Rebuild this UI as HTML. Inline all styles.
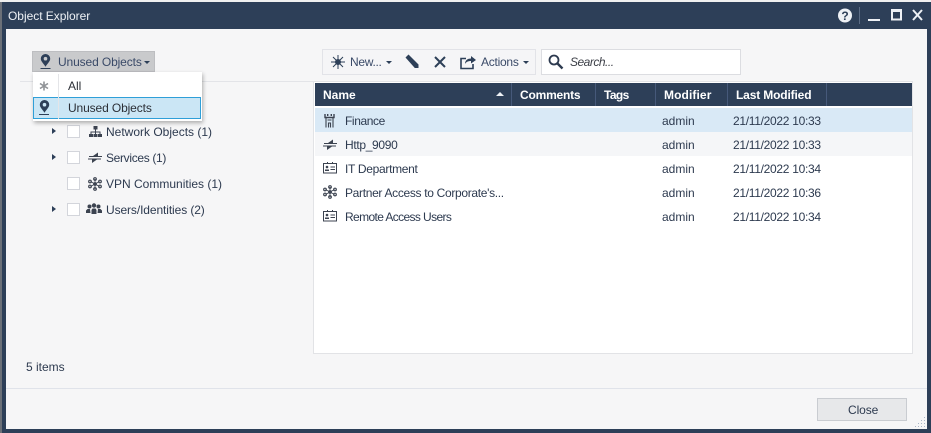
<!DOCTYPE html>
<html><head><meta charset="utf-8">
<style>
html,body{margin:0;padding:0;width:931px;height:433px;overflow:hidden;background:#2d3f58}
body{position:relative;font-family:"Liberation Sans","DejaVu Sans",sans-serif;font-size:12px;color:#2d3a4f}
div,span,svg{position:absolute;box-sizing:border-box}
.t{white-space:nowrap;line-height:16px;height:16px}
.th{color:#fff;font-weight:bold;white-space:nowrap;top:87px;line-height:16px}
.dv{top:83px;height:23px;width:1px;background:#46597a}
.cb{left:67px;width:13px;height:13px;background:#fff;border:1px solid #d3d5db}
.row{left:315px;width:597px;height:24px}
.tri{width:0;height:0;border-top:3.5px solid transparent;border-bottom:3.5px solid transparent;border-left:4px solid #2d3f58;left:52px}
.d{letter-spacing:-.3px}
</style></head><body>
<div style="left:0;top:0;width:931px;height:2px;background:#f0f0f0"></div>
<div style="left:0;top:2px;width:2px;height:431px;background:#6b7078"></div>
<div style="left:6px;top:29px;width:921px;height:400px;background:#f6f6f7"></div>

<div class="t" style="left:8px;top:8px;color:#eef1f5;letter-spacing:-.03px">Object Explorer</div>
<svg style="left:838px;top:7px" width="93" height="18" viewBox="0 0 93 18">
<circle cx="7" cy="8.500" r="7" fill="#eef1f5"/>
<text x="7" y="13" font-family="Liberation Sans" font-weight="bold" font-size="12" text-anchor="middle" fill="#2d3f58">?</text>
<rect x="21" y="0" width="1" height="17" fill="#5b6c85"/>
<rect x="30" y="12" width="12" height="2" fill="#eef1f5"/>
<rect x="54" y="3.500" width="9" height="9" fill="none" stroke="#eef1f5" stroke-width="2"/>
<rect x="53" y="2" width="11" height="3" fill="#eef1f5"/>
<path d="M75 3l9 10M84 3l-9 10" stroke="#eef1f5" stroke-width="2" fill="none"/>
</svg>

<div style="left:20px;top:81px;width:294px;height:1px;background:#e3e4e8"></div>

<!-- filter button -->
<div style="left:32px;top:51px;width:123px;height:21px;background:#c9cacc;border:1px solid #bdbec1"></div>
<svg style="left:38px;top:54px" width="15" height="16" viewBox="0 0 15 16">
<path d="M7.500 0a4.700 4.700 0 0 1 4.700 4.700c0 2.700-3 5-4.700 8c-1.700-3-4.700-5.300-4.700-8A4.700 4.700 0 0 1 7.500 0z" fill="#2d3f58"/><circle cx="7.500" cy="4.700" r="1.800" fill="#c9cacc"/>
<rect x="2.500" y="14" width="10" height="1" fill="#2d3f58"/></svg>
<div class="t" style="left:58px;top:54px;color:#3a4a68;letter-spacing:-.12px">Unused Objects</div>
<div style="left:144px;top:61px;border-left:3px solid transparent;border-right:3px solid transparent;border-top:3px solid #2d3f58"></div>

<!-- tree -->
<div class="tri" style="top:128px"></div>
<div class="cb" style="top:125px"></div>
<svg style="left:89px;top:125px" width="13" height="13" viewBox="0 0 13 13"><path d="M4.500 1h4v3.500h-4zM6 4.500h1V6.500h4.500V9h-1V7.500H7V9H6V7.500H2.500V9h-1V6.500H6zM0 9h4v3H0zM4.500 9h4v3h-4zM9 9h4v3H9z" fill="#3c4350"/></svg>
<div class="t" style="left:106px;top:124px">Network Objects (1)</div>

<div class="tri" style="top:154px"></div>
<div class="cb" style="top:151px"></div>
<svg style="left:88px;top:151px" width="14" height="13" viewBox="0 0 14 13"><path d="M1 5h13v1H1zM5 5l5-3.500V5zM0 7.500h13v1H0zM4 8.500h5L4 12z" fill="#3c4350"/></svg>
<div class="t" style="left:106px;top:150px;letter-spacing:-.33px">Services (1)</div>

<div class="cb" style="top:177px"></div>
<svg style="left:88px;top:177px" width="14" height="14" viewBox="0 0 14 14" fill="none" stroke="#3c4350"><path d="M7 2v10M2.500 4.500l9 5M11.500 4.500l-9 5" stroke-width=".8"/><circle cx="7" cy="2" r="1.300" stroke-width="1.200"/><circle cx="7" cy="12" r="1.300" stroke-width="1.200"/><circle cx="2" cy="4.500" r="1.300" stroke-width="1.200"/><circle cx="12" cy="4.500" r="1.300" stroke-width="1.200"/><circle cx="2" cy="9.500" r="1.300" stroke-width="1.200"/><circle cx="12" cy="9.500" r="1.300" stroke-width="1.200"/><circle cx="7" cy="7" r="1.300" stroke-width="1.200"/></svg>
<div class="t" style="left:106px;top:176px">VPN Communities (1)</div>

<div class="tri" style="top:206px"></div>
<div class="cb" style="top:203px"></div>
<svg style="left:86px;top:202px" width="16" height="14" viewBox="0 0 16 14" fill="#3c4350"><circle cx="3.500" cy="4.500" r="2"/><circle cx="12.500" cy="4.500" r="2"/><circle cx="8" cy="3.500" r="2.200"/><path d="M0 11V8.500l1.500-1.500H4l.5 4zM16 11V8.500L14.500 7H12l-.5 4zM5.500 12V8l1-1.500h3l1 1.500v4z"/></svg>
<div class="t" style="left:106px;top:202px;letter-spacing:-.1px">Users/Identities (2)</div>

<!-- dropdown -->
<div style="left:33px;top:72px;width:169px;height:49px;background:#fff;box-shadow:1px 2px 4px rgba(0,0,0,.3)"></div>
<div style="left:33px;top:97px;width:168px;height:22px;background:#cbe6f5;border:1px solid #2f9fd8"></div>
<div style="left:58px;top:74px;width:1px;height:45px;background:#e4e5e8"></div>
<svg style="left:39px;top:81px" width="10" height="10" viewBox="0 0 10 10"><path d="M5 0.500v9M1 2.500l8 5M9 2.500l-8 5" stroke="#8f9296" stroke-width="1.600" fill="none"/></svg>
<div class="t" style="left:68px;top:78px;color:#2b2f36">All</div>
<svg style="left:37px;top:100px" width="15" height="16" viewBox="0 0 15 16">
<path d="M7.500 0a4.700 4.700 0 0 1 4.700 4.700c0 2.700-3 5-4.700 8c-1.700-3-4.700-5.300-4.700-8A4.700 4.700 0 0 1 7.500 0z" fill="#2d3f58"/><circle cx="7.500" cy="4.700" r="1.800" fill="#cbe6f5"/>
<rect x="2" y="14" width="10" height="1" fill="#2d3f58"/></svg>
<div class="t" style="left:68px;top:100px;color:#2b2f36;letter-spacing:-.12px">Unused Objects</div>

<!-- toolbar -->
<div style="left:322px;top:49px;width:214px;height:26px;background:#f5f5f7;border:1px solid #e2e3e8"></div>
<svg style="left:330px;top:54px" width="16" height="16" viewBox="0 0 16 16"><path d="M8 1v14M1 8h14M3 3l10 10M13 3L3 13" stroke="#2d3f58" stroke-width="1"/><circle cx="8" cy="8" r="3" fill="#2d3f58"/></svg>
<div class="t" style="left:350px;top:54px;color:#3a4a68;letter-spacing:-.3px">New...</div>
<div style="left:386px;top:61px;border-left:3px solid transparent;border-right:3px solid transparent;border-top:3px solid #2d3f58"></div>
<svg style="left:405px;top:54px" width="14" height="15" viewBox="0 0 14 15"><path d="M3.500 0.500L13.500 10.500L13.500 14L9.800 14L0.500 3.500z" fill="#2d3f58"/></svg>
<svg style="left:434px;top:56px" width="12" height="12" viewBox="0 0 12 12"><path d="M1 1l10 10M11 1L1 11" stroke="#2d3f58" stroke-width="2"/></svg>
<svg style="left:460px;top:54px" width="16" height="16" viewBox="0 0 16 16"><path d="M6 4.500H1v10h12V10" stroke="#2d3f58" stroke-width="1.600" fill="none"/><path d="M5 10c0-4 3-5.500 6-5.500V2l5 4-5 3.500V7c-3 0-5 1-6 3z" fill="#2d3f58"/></svg>
<div class="t" style="left:481px;top:54px;color:#3a4a68;letter-spacing:-.25px">Actions</div>
<div style="left:523px;top:61px;border-left:3px solid transparent;border-right:3px solid transparent;border-top:3px solid #2d3f58"></div>

<!-- search -->
<div style="left:541px;top:49px;width:200px;height:26px;background:#fff;border:1px solid #dcdde1"></div>
<svg style="left:548px;top:54px" width="16" height="16" viewBox="0 0 16 16"><circle cx="6" cy="6" r="4.500" fill="none" stroke="#2d3a4f" stroke-width="1.800"/><path d="M9.500 9.500l5 5" stroke="#2d3a4f" stroke-width="2.400"/></svg>
<div class="t" style="left:570px;top:54px;font-style:italic;color:#3d4048;letter-spacing:-.5px">Search...</div>

<!-- table -->
<div style="left:313px;top:81px;width:600px;height:273px;background:#fff;border:1px solid #e2e3e6"></div>
<div style="left:315px;top:83px;width:597px;height:23px;background:#2d3f58"></div>
<div class="th" style="left:323px">Name</div>
<div style="left:496px;top:92px;border-left:4px solid transparent;border-right:4px solid transparent;border-bottom:4px solid #eef1f5"></div>
<div class="dv" style="left:511px"></div>
<div class="th" style="left:520px;letter-spacing:-.2px">Comments</div>
<div class="dv" style="left:595px"></div>
<div class="th" style="left:604px;letter-spacing:-.6px">Tags</div>
<div class="dv" style="left:655px"></div>
<div class="th" style="left:664px;letter-spacing:.1px">Modifier</div>
<div class="dv" style="left:727px"></div>
<div class="th" style="left:736px;letter-spacing:-.15px">Last Modified</div>
<div class="dv" style="left:826px"></div>

<div class="row" style="top:108px;background:#d9e9f6"></div>
<div class="row" style="top:132px;background:#f5f6f8"></div>

<svg style="left:323px;top:114px" width="13" height="14" viewBox="0 0 13 14" fill="none" stroke="#3c4350"><path d="M2 0v3.500h9V0M4.700 0v2M8.300 0v2" stroke-width="1.400"/><path d="M3 3.500v10M10 3.500v10M4.500 6h4M5.500 13.500V9h2v4.500" stroke-width="1.100"/></svg>
<div class="t" style="left:345px;top:113px;letter-spacing:-.4px">Finance</div>
<div class="t" style="left:662px;top:113px">admin</div>
<div class="t d" style="left:733px;top:113px">21/11/2022 10:33</div>

<svg style="left:323px;top:138px" width="14" height="13" viewBox="0 0 14 13"><path d="M1 5h13v1H1zM5 5l5-3.500V5zM0 7.500h13v1H0zM4 8.500h5L4 12z" fill="#3c4350"/></svg>
<div class="t" style="left:345px;top:137px;letter-spacing:-.33px">Http_9090</div>
<div class="t" style="left:662px;top:137px">admin</div>
<div class="t d" style="left:733px;top:137px">21/11/2022 10:33</div>

<svg style="left:323px;top:162px" width="14" height="12" viewBox="0 0 14 12"><rect x="0.500" y="1.500" width="13" height="9.500" fill="none" stroke="#3c4350"/><rect x="4" y="0" width="1" height="2" fill="#3c4350"/><rect x="9" y="0" width="1" height="2" fill="#3c4350"/><circle cx="4" cy="5" r="1.300" fill="#3c4350"/><path d="M2 9V7.500h4V9zM7.500 4.500h4.500v1H7.500zM7.500 7h4.500v1H7.500z" fill="#3c4350"/></svg>
<div class="t" style="left:345px;top:161px;letter-spacing:-.3px">IT Department</div>
<div class="t" style="left:662px;top:161px">admin</div>
<div class="t d" style="left:733px;top:161px">21/11/2022 10:34</div>

<svg style="left:323px;top:185px" width="14" height="14" viewBox="0 0 14 14" fill="none" stroke="#3c4350"><path d="M7 2v10M2.500 4.500l9 5M11.500 4.500l-9 5" stroke-width=".8"/><circle cx="7" cy="2" r="1.300" stroke-width="1.200"/><circle cx="7" cy="12" r="1.300" stroke-width="1.200"/><circle cx="2" cy="4.500" r="1.300" stroke-width="1.200"/><circle cx="12" cy="4.500" r="1.300" stroke-width="1.200"/><circle cx="2" cy="9.500" r="1.300" stroke-width="1.200"/><circle cx="12" cy="9.500" r="1.300" stroke-width="1.200"/><circle cx="7" cy="7" r="1.300" stroke-width="1.200"/></svg>
<div class="t" style="left:345px;top:185px;letter-spacing:-.32px">Partner Access to Corporate's...</div>
<div class="t" style="left:662px;top:185px">admin</div>
<div class="t d" style="left:733px;top:185px">21/11/2022 10:36</div>

<svg style="left:323px;top:210px" width="14" height="12" viewBox="0 0 14 12"><rect x="0.500" y="1.500" width="13" height="9.500" fill="none" stroke="#3c4350"/><rect x="4" y="0" width="1" height="2" fill="#3c4350"/><rect x="9" y="0" width="1" height="2" fill="#3c4350"/><circle cx="4" cy="5" r="1.300" fill="#3c4350"/><path d="M2 9V7.500h4V9zM7.500 4.500h4.500v1H7.500zM7.500 7h4.500v1H7.500z" fill="#3c4350"/></svg>
<div class="t" style="left:345px;top:209px;letter-spacing:-.62px">Remote Access Users</div>
<div class="t" style="left:662px;top:209px">admin</div>
<div class="t d" style="left:733px;top:209px">21/11/2022 10:34</div>

<!-- footer -->
<div class="t" style="left:26px;top:359px">5 items</div>
<div style="left:6px;top:388px;width:921px;height:1px;background:#e0e3ea"></div>
<div style="left:817px;top:398px;width:90px;height:23px;background:#e7e8ea;border:1px solid #c9ccd1"></div>
<div class="t" style="left:848px;top:402px;letter-spacing:-.1px">Close</div>
<svg style="left:914px;top:416px" width="12" height="12" viewBox="0 0 12 12" fill="#a9b4c6"><rect x="10" y="1" width="1" height="1"/><rect x="10" y="4" width="1" height="1"/><rect x="7" y="4" width="1" height="1"/><rect x="10" y="7" width="1" height="1"/><rect x="7" y="7" width="1" height="1"/><rect x="4" y="7" width="1" height="1"/><rect x="10" y="10" width="1" height="1"/><rect x="7" y="10" width="1" height="1"/><rect x="4" y="10" width="1" height="1"/><rect x="1" y="10" width="1" height="1"/></svg>
</body></html>
